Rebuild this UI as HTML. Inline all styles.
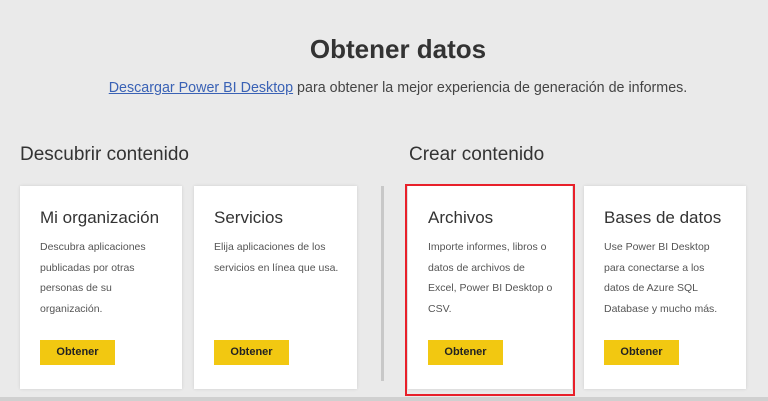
<!DOCTYPE html><html><head><style>
body{margin:0;width:768px;height:401px;background:#eaeaea;font-family:"Liberation Sans",sans-serif;position:relative;overflow:hidden;color:#333}
.a{position:absolute}
h1{position:absolute;top:34px;left:0;width:796px;text-align:center;margin:0;font-size:26px;font-weight:bold;color:#333}
.sub{top:80px;left:0;width:796px;text-align:center;font-size:14.3px;color:#444}
.sub span{color:#3a62b5;text-decoration:underline}
.sec{font-size:19px;top:144px;color:#333}
.card{position:absolute;top:186px;height:203px;background:#fff;box-shadow:0 0 3px rgba(0,0,0,.12)}
.card .t{position:absolute;left:20px;top:22px;font-size:17px;color:#333;white-space:nowrap}
.card .d{position:absolute;left:20px;top:51px;font-size:10.5px;line-height:20.6px;color:#555;white-space:nowrap}
.card .b{position:absolute;left:20px;top:154px;width:75px;height:25px;background:#f2c811;font-size:11px;font-weight:bold;color:#222;text-align:center;line-height:25px}
</style></head><body>
<h1>Obtener datos</h1>
<div class="a sub"><span>Descargar Power BI Desktop</span> para obtener la mejor experiencia de generación de informes.</div>
<div class="a sec" style="left:20px">Descubrir contenido</div>
<div class="a sec" style="left:409px">Crear contenido</div>
<div class="card" style="left:20px;width:162px"><div class="t">Mi organización</div><div class="d">Descubra aplicaciones<br>publicadas por otras<br>personas de su<br>organización.</div><div class="b">Obtener</div></div>
<div class="card" style="left:194px;width:163px"><div class="t">Servicios</div><div class="d">Elija aplicaciones de los<br>servicios en línea que usa.</div><div class="b">Obtener</div></div>
<div class="a" style="left:381px;top:186px;width:3px;height:195px;background:#c8c8c8"></div>
<div class="card" style="left:408px;width:164px"><div class="t">Archivos</div><div class="d">Importe informes, libros o<br>datos de archivos de<br>Excel, Power BI Desktop o<br>CSV.</div><div class="b">Obtener</div></div>
<div class="a" style="left:405px;top:184px;width:166px;height:208px;border:2px solid #e8202a"></div>
<div class="card" style="left:584px;width:162px"><div class="t">Bases de datos</div><div class="d">Use Power BI Desktop<br>para conectarse a los<br>datos de Azure SQL<br>Database y mucho más.</div><div class="b">Obtener</div></div>
<div class="a" style="left:0;top:397px;width:768px;height:4px;background:#d0d0d0"></div>
</body></html>
